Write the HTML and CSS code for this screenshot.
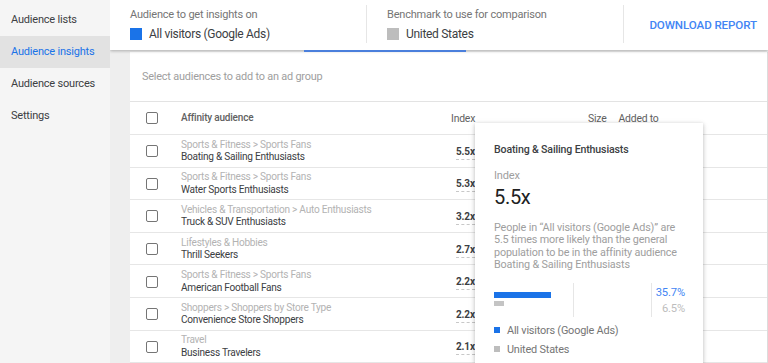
FILE: index.html
```html
<!DOCTYPE html>
<html>
<head>
<meta charset="utf-8">
<link rel="stylesheet" href="styles.css">
</head>
<body>
<div class="app">
  <nav class="sidebar">
    <div class="nav-item">Audience lists</div>
    <div class="nav-item active">Audience insights</div>
    <div class="nav-item">Audience sources</div>
    <div class="nav-item">Settings</div>
  </nav>
  <main class="main">
    <header class="topbar">
      <div class="picker picker-first">
        <div class="picker-label">Audience to get insights on</div>
        <div class="picker-value"><span class="swatch swatch-blue"></span>All visitors (Google Ads)</div>
      </div>
      <div class="divider"></div>
      <div class="picker">
        <div class="picker-label">Benchmark to use for comparison</div>
        <div class="picker-value"><span class="swatch swatch-gray"></span>United States</div>
      </div>
      <div class="divider"></div>
      <div class="download">DOWNLOAD REPORT</div>
      <div class="tab-indicator"></div>
    </header>
    <section class="card">
      <div class="card-intro">Select audiences to add to an ad group</div>
      <div class="row head">
        <span class="cb"></span>
        <span class="col-name head-name">Affinity audience</span>
        <span class="col-idx">Index</span>
        <span class="col-size">Size</span>
        <span class="col-added">Added to</span>
      </div>
      <div class="row">
        <span class="cb"></span>
        <span class="col-name"><span class="cat">Sports &amp; Fitness &gt; Sports Fans</span><span class="aud">Boating &amp; Sailing Enthusiasts</span></span>
        <span class="col-idx val"><span>5.5x</span></span>
      </div>
      <div class="row">
        <span class="cb"></span>
        <span class="col-name"><span class="cat">Sports &amp; Fitness &gt; Sports Fans</span><span class="aud">Water Sports Enthusiasts</span></span>
        <span class="col-idx val"><span>5.3x</span></span>
      </div>
      <div class="row">
        <span class="cb"></span>
        <span class="col-name"><span class="cat">Vehicles &amp; Transportation &gt; Auto Enthusiasts</span><span class="aud">Truck &amp; SUV Enthusiasts</span></span>
        <span class="col-idx val"><span>3.2x</span></span>
      </div>
      <div class="row">
        <span class="cb"></span>
        <span class="col-name"><span class="cat">Lifestyles &amp; Hobbies</span><span class="aud">Thrill Seekers</span></span>
        <span class="col-idx val"><span>2.7x</span></span>
      </div>
      <div class="row">
        <span class="cb"></span>
        <span class="col-name"><span class="cat">Sports &amp; Fitness &gt; Sports Fans</span><span class="aud">American Football Fans</span></span>
        <span class="col-idx val"><span>2.2x</span></span>
      </div>
      <div class="row">
        <span class="cb"></span>
        <span class="col-name"><span class="cat">Shoppers &gt; Shoppers by Store Type</span><span class="aud">Convenience Store Shoppers</span></span>
        <span class="col-idx val"><span>2.2x</span></span>
      </div>
      <div class="row">
        <span class="cb"></span>
        <span class="col-name"><span class="cat">Travel</span><span class="aud">Business Travelers</span></span>
        <span class="col-idx val"><span>2.1x</span></span>
      </div>
    </section>
    <div class="tooltip">
      <div class="tt-title">Boating &amp; Sailing Enthusiasts</div>
      <div class="tt-label">Index</div>
      <div class="tt-value">5.5x</div>
      <div class="tt-desc">People in “All visitors (Google Ads)” are 5.5 times more likely than the general population to be in the affinity audience Boating &amp; Sailing Enthusiasts</div>
      <div class="chart">
        <div class="chart-bars">
          <div class="bar bar-blue" style="width:57px"></div>
          <div class="bar bar-gray" style="width:10px"></div>
        </div>
        <div class="chart-mid"></div>
        <div class="chart-vals">
          <div class="pct-blue">35.7%</div>
          <div class="pct-gray">6.5%</div>
        </div>
      </div>
      <div class="legend">
        <div class="legend-item"><span class="lsq lsq-blue"></span>All visitors (Google Ads)</div>
        <div class="legend-item"><span class="lsq lsq-gray"></span>United States</div>
      </div>
    </div>
  </main>
</div>
</body>
</html>
```
FILE: styles.css
```css
* { box-sizing: border-box; }
html, body {
  margin: 0;
  width: 768px;
  height: 363px;
  overflow: hidden;
  font-family: Roboto, "Liberation Sans", Arial, sans-serif;
  background: #eeeeee;
  color: #202124;
}
.app {
  display: flex;
  height: 363px;
  overflow: hidden;
}
.sidebar {
  width: 110px;
  flex: none;
  background: #f5f5f5;
  padding-top: 4px;
}
.nav-item {
  height: 32px;
  line-height: 32px;
  padding-left: 11px;
  font-size: 11px;
  letter-spacing: -0.2px;
  color: #3c4043;
  white-space: nowrap;
}
.nav-item.active {
  background: #e2e2e2;
  color: #1a73e8;
}
.main {
  flex: 1;
  position: relative;
  background: #eeeeee;
  display: flex;
  flex-direction: column;
  overflow: hidden;
}
.topbar {
  position: relative;
  z-index: 2;
  height: 50px;
  flex: none;
  background: #fff;
  display: flex;
  box-shadow: 0 1px 3px rgba(0,0,0,0.28);
}
.picker {
  width: 235px;
  padding-left: 20px;
  padding-top: 7px;
}
.picker-first { width: 256px; }
.picker-label {
  font-size: 11px;
  letter-spacing: -0.2px;
  line-height: 16px;
  color: #757575;
}
.picker-value {
  margin-top: 3px;
  display: flex;
  align-items: center;
  font-size: 12px;
  letter-spacing: -0.3px;
  line-height: 16px;
  color: #3c4043;
}
.swatch {
  width: 12px;
  height: 12px;
  margin-right: 7px;
  flex: none;
}
.swatch-blue { background: #1a73e8; }
.swatch-gray { background: #bdbdbd; }
.divider {
  width: 1px;
  margin: 5px 0 7px;
  background: #e6e6e6;
}
.picker + .divider + .picker { width: 256px; }
.download {
  flex: 1;
  text-align: right;
  padding-right: 11px;
  padding-top: 18px;
  font-size: 11.6px;
  font-weight: 500;
  color: #4285f4;
  letter-spacing: -0.1px;
}
.tab-indicator {
  position: absolute;
  left: 194px;
  bottom: -2px;
  width: 162px;
  height: 2px;
  background: #4a7fdc;
}
.card {
  flex: 1;
  margin-left: 20px;
  margin-top: 2px;
  background: #fff;
  border-right: 1px solid #dcdcdc;
  overflow: hidden;
}
.card-intro {
  height: 50px;
  line-height: 50px;
  padding-left: 12px;
  font-size: 10.9px;
  letter-spacing: -0.2px;
  color: #9e9e9e;
  border-bottom: 1px solid #e3e3e3;
}
.row {
  display: flex;
  align-items: center;
  height: 32.6px;
  padding-left: 16px;
  padding-top: 1px;
  border-bottom: 1px solid #e6e6e6;
  font-size: 10.1px;
  letter-spacing: -0.25px;
}
.row.head { height: 33px; padding-top: 0; }
.cb {
  width: 12px;
  height: 12px;
  border: 1.5px solid #757575;
  border-radius: 2px;
  margin-right: 23px;
  flex: none;
}
.col-name {
  width: 270px;
  display: flex;
  flex-direction: column;
  line-height: 12.5px;
}
.head-name {
  font-weight: 500;
  color: #616161;
  font-size: 10px;
  letter-spacing: -0.2px;
}
.cat { color: #b3b3b3; }
.aud { color: #3c4043; }
.col-idx {
  width: 24px;
  text-align: right;
  color: #616161;
  font-size: 10.4px;
  letter-spacing: -0.2px;
}
.val span {
  font-weight: 700;
  color: #3c4043;
  border-bottom: 1px dashed #c8c8c8;
  padding-bottom: 2px;
  font-size: 10px;
  letter-spacing: -0.1px;
}
.col-size {
  margin-left: 113px;
  color: #616161;
  font-size: 10.4px;
  letter-spacing: -0.2px;
}
.col-added {
  margin-left: 12px;
  color: #616161;
  font-size: 10.4px;
  letter-spacing: -0.2px;
}
.tooltip {
  position: absolute;
  z-index: 3;
  left: 365px;
  top: 123px;
  width: 228px;
  height: 240px;
  background: #fff;
  box-shadow: 0 1px 4px rgba(0,0,0,0.22), 0 2px 8px rgba(0,0,0,0.08);
  padding: 20px 18px 0 19px;
  overflow: hidden;
}
.tt-title {
  font-size: 10.6px;
  letter-spacing: -0.15px;
  line-height: 14px;
  font-weight: 500;
  color: #3c4043;
}
.tt-label {
  margin-top: 12px;
  font-size: 11px;
  letter-spacing: -0.15px;
  line-height: 14px;
  color: #9e9e9e;
}
.tt-value {
  margin-top: 2px;
  font-size: 20px;
  letter-spacing: -0.3px;
  line-height: 24px;
  color: #212121;
}
.tt-desc {
  margin-top: 13px;
  font-size: 10.8px;
  letter-spacing: -0.15px;
  line-height: 12.4px;
  color: #9e9e9e;
}
.chart {
  margin-top: 11px;
  display: flex;
  height: 34px;
}
.chart-bars {
  width: 80px;
  border-right: 1px solid #e6e6e6;
  padding-top: 9px;
}
.bar { height: 6px; }
.bar-blue { background: #1a73e8; }
.bar-gray { background: #c4c4c4; margin-top: 3px; height: 5px; }
.chart-mid {
  width: 78px;
  border-right: 1px solid #e6e6e6;
}
.chart-vals {
  flex: 1;
  text-align: right;
  font-size: 11.2px;
  letter-spacing: -0.15px;
  line-height: 16px;
  padding-top: 2px;
}
.pct-blue { color: #4285f4; }
.pct-gray { color: #bdbdbd; }
.legend { margin-top: 4px; }
.legend-item {
  display: flex;
  align-items: center;
  line-height: 19px;
  font-size: 10.9px;
  letter-spacing: -0.2px;
  color: #757575;
}
.lsq {
  width: 6px;
  height: 6px;
  margin-right: 7px;
}
.lsq-blue { background: #1a73e8; }
.lsq-gray { background: #bdbdbd; }
```
